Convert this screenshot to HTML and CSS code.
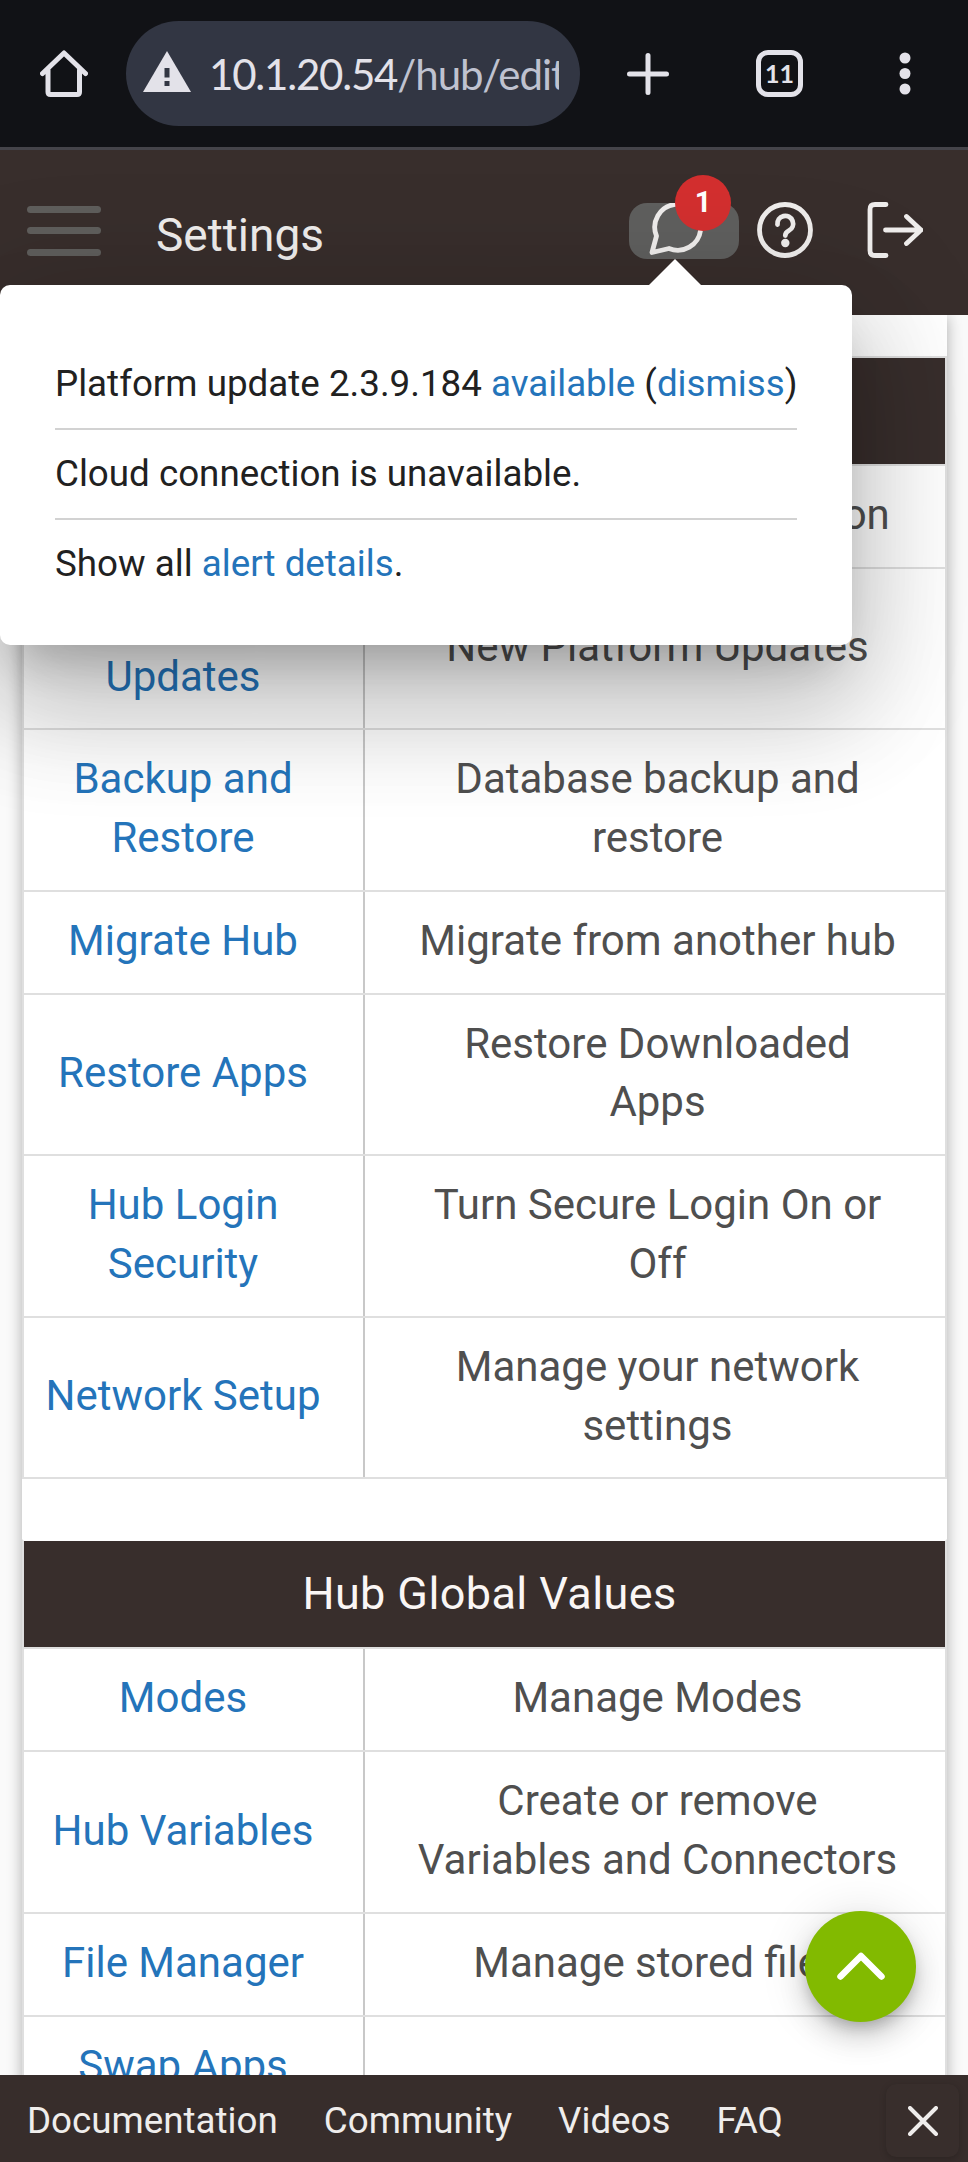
FILE: index.html
```html
<!DOCTYPE html>
<html lang="en">

<head>
    <meta charset="UTF-8">
    <meta name="viewport" content="width=device-width, initial-scale=1.0">
    <title>Settings</title>
    <link rel="stylesheet" href="styles.css">
</head>

<body>
    <div class="browser_bar">
        <svg class="home" width="48" height="48" viewBox="0 0 48 48">
            <path d="M2.5 23.5 L24 3 L45.5 23.5 M8 20 V42 Q8 44.5 10.5 44.5 H37 Q39.500 44.5 39.500 42 V20" />
        </svg>
        <div class="url">
            <svg width="48" height="41" viewBox="0 0 48 41">
                <path fill="#e3e2e9" d="M24 0 L48 41 H0 Z" />
                <path fill="#323643" d="M21.500 17 H26.500 V26.500 H21.500 Z M21.500 30 H26.500 V35 H21.500 Z" />
            </svg>
            <div class="url_text"><span class="host">10.1.20.54</span><span class="path">/hub/edit</span></div>
        </div>
        <svg class="plus" width="42" height="42" viewBox="0 0 42 42">
            <path d="M21 2.500 V39.500 M2.500 21 H39.500" />
        </svg>
        <div class="tabs">11</div>
        <svg class="dots" width="12" height="43" viewBox="0 0 12 43">
            <circle cx="6" cy="6" r="5.500" />
            <circle cx="6" cy="21.500" r="5.500" />
            <circle cx="6" cy="37" r="5.500" />
        </svg>
    </div>

    <header class="app_header">
        <div class="hamburger"><span></span><span></span><span></span></div>
        <h1>Settings</h1>
        <div class="alerts">
            <svg width="56" height="56" viewBox="0 0 56 56">
                <path d="M4 49.500 L8.500 33 A23 23 0 1 1 21 45.500 Z" />
            </svg>
            <div class="badge">1</div>
        </div>
        <svg class="help" width="56" height="56" viewBox="0 0 56 56">
            <circle cx="28" cy="28" r="25.500" />
            <path d="M20.500 22.500 A7.800 7.800 0 1 1 32 28.500 Q28.300 30.500 28.300 33.500" />
            <circle class="dot" cx="28.300" cy="41" r="4.200" />
        </svg>
        <svg class="logout" width="56" height="56" viewBox="0 0 56 56">
            <path d="M19 2.500 H8 Q3 2.500 3 7.500 V48.500 Q3 53.500 8 53.500 H19 M18.500 28 H54 M39.500 14.500 L54 28 L39.500 41.500" />
        </svg>

        <div class="popup">
            <p>Platform update 2.3.9.184 <a>available</a> (<a>dismiss</a>)</p>
            <p>Cloud connection is unavailable.</p>
            <p>Show all <a>alert details</a>.</p>
        </div>
    </header>

    <main>
        <div class="card">
            <div class="table">
                <div class="thead">Hub Settings</div>
                <div class="row"><a>Hub Details</a><div>Hub location information</div></div>
                <div class="row"><a>Check for Updates</a><div>New Platform Updates</div></div>
                <div class="row"><a>Backup and Restore</a><div>Database backup and restore</div></div>
                <div class="row"><a>Migrate Hub</a><div>Migrate from another hub</div></div>
                <div class="row"><a>Restore Apps</a><div>Restore Downloaded Apps</div></div>
                <div class="row"><a>Hub Login Security</a><div>Turn Secure Login On or Off</div></div>
                <div class="row"><a>Network Setup</a><div>Manage your network settings</div></div>
            </div>
            <div class="table">
                <div class="thead">Hub Global Values</div>
                <div class="row"><a>Modes</a><div>Manage Modes</div></div>
                <div class="row"><a>Hub Variables</a><div>Create or remove Variables and Connectors</div></div>
                <div class="row"><a>File Manager</a><div>Manage stored files</div></div>
                <div class="row"><a>Swap Apps Device</a><div></div></div>
            </div>
        </div>
    </main>

    <div class="to_top">
        <svg width="48" height="28" viewBox="0 0 48 28">
            <path d="M3.500 24.500 L24 4 L44.500 24.500" />
        </svg>
    </div>

    <footer>
        <a>Documentation</a>
        <a>Community</a>
        <a>Videos</a>
        <a>FAQ</a>
        <div class="close">
            <svg width="30" height="30" viewBox="0 0 30 30">
                <path d="M2 2 L28 28 M28 2 L2 28" />
            </svg>
        </div>
    </footer>
</body>

</html>
```
FILE: styles.css
```css
* {
    box-sizing: border-box;
}

body {
    font-family: Roboto, "Liberation Sans", sans-serif;
    margin: 0;
    height: 2162px;
    display: flex;
    flex-direction: column;
    overflow: hidden;
    background-color: #fafafa;
    position: relative;
}

svg {
    fill: none;
    stroke-linecap: round;
    stroke-linejoin: round;
    flex: none;
}

a {
    color: #2474ba;
    text-decoration: none;
}

/* Browser toolbar */

.browser_bar {
    flex: none;
    height: 150px;
    padding: 0 57px 0 40px;
    border-bottom: 3px solid #45444a;
    background-color: #111216;
    display: flex;
    align-items: center;
}

.home,
.plus {
    stroke: #e3e2e9;
    stroke-width: 5;
}

.url {
    width: 454px;
    height: 105px;
    margin: 0 47px 0 38px;
    padding: 0 21px 0 17px;
    border-radius: 53px;
    background-color: #323643;
    display: flex;
    align-items: center;
}

.url svg {
    margin-top: -4px;
}

.url_text {
    margin-left: 18px;
    flex: 1;
    overflow: hidden;
    white-space: nowrap;
    font: 42px Lato, sans-serif;
    color: #e3e2e9;
}

.host {
    letter-spacing: -1.2px;
}

.path {
    letter-spacing: -1px;
    color: #bfc2d0;
}

.tabs {
    width: 47px;
    height: 47px;
    margin: 0 96px 0 87px;
    border: 5px solid #e3e2e9;
    border-radius: 12px;
    color: #e3e2e9;
    font: bold 25px/37px Lato, sans-serif;
    text-align: center;
}

.dots {
    fill: #e3e2e9;
}

/* App header */

.app_header {
    flex: none;
    height: 165px;
    padding: 0 45px 8px 27px;
    background-color: #382e2c;
    display: flex;
    align-items: center;
    position: relative;
    z-index: 2;
}

.app_header svg {
    stroke: #efedec;
    stroke-width: 4.8;
}

.hamburger {
    width: 74px;
    display: flex;
    flex-direction: column;
    gap: 14.500px;
    margin-top: 4px;
}

.hamburger span {
    height: 7px;
    border-radius: 4px;
    background-color: #5f5e5c;
}

h1 {
    margin: 12px auto 0 55px;
    font-size: 46px;
    font-weight: 400;
    color: #efedec;
}

.alerts {
    width: 110px;
    height: 56px;
    margin: 5px 18px 0 0;
    padding-left: 19px;
    border-radius: 18px;
    background-color: #5f5f5e;
    position: relative;
}

.badge {
    position: absolute;
    left: 46px;
    top: -28px;
    width: 56px;
    height: 56px;
    border-radius: 50%;
    background-color: #d32f2f;
    color: #fff;
    font-size: 29px;
    font-weight: 700;
    line-height: 54px;
    text-align: center;
}

.help,
.logout {
    margin-top: 3px;
}

.help {
    margin-right: 54px;
}

.help .dot {
    fill: #efedec;
    stroke: none;
}

.popup {
    position: absolute;
    left: 0;
    top: 135px;
    width: 852px;
    height: 360px;
    padding: 55px 55px 53px;
    border-radius: 10px;
    background-color: #fff;
    box-shadow: 0 30px 41px -19px rgba(0, 0, 0, 0.2), 0 66px 104px 8px rgba(0, 0, 0, 0.16), 0 25px 126px 22px rgba(0, 0, 0, 0.13);
}

.popup::before {
    content: "";
    position: absolute;
    left: 649px;
    top: -26px;
    border: 26px solid transparent;
    border-top: 0;
    border-bottom-color: #fff;
}

.popup p {
    margin: 0;
    height: 90px;
    border-bottom: 2px solid #d2d2d2;
    font-size: 36.750px;
    line-height: 88px;
    white-space: nowrap;
    color: #212121;
}

.popup p:last-child {
    border: none;
}

/* Settings tables */

main {
    flex: 1;
    min-height: 0;
    overflow: hidden;
    padding: 0 21px 0 22px;
}

.card {
    background-color: #fff;
    padding-top: 41px;
    box-shadow: 0 2px 14px rgba(0, 0, 0, 0.3);
}

.table {
    margin-bottom: 60px;
    border: 2px solid #dfdfdf;
    border-bottom: none;
}

.table + .table {
    border-top-color: #fff;
}

.thead {
    height: 106px;
    padding-left: 10px;
    background-color: #382e2c;
    color: #faf6f5;
    font-size: 45px;
    letter-spacing: 0.4px;
    line-height: 106px;
    text-align: center;
}

.thead + .row {
    border-top: 2px solid #dfdfdf;
}

.row {
    display: grid;
    grid-template-columns: 341px 1fr;
    border-bottom: 2px solid #dfdfdf;
    font-size: 42px;
    line-height: 58.700px;
    text-align: center;
}

.row > * {
    padding: 20px 42px 22.150px 47px;
    color: #4f4f4f;
    display: flex;
    align-items: center;
    justify-content: center;
}

.row > a {
    padding: 20px 41px 22.150px 20px;
    border-right: 2px solid #c8c8c8;
    color: #2474ba;
}

/* Floating button and footer */

.to_top {
    position: absolute;
    left: 805px;
    top: 1911px;
    width: 111px;
    height: 111px;
    border-radius: 50%;
    background-color: #82ba00;
    box-shadow: 0 8px 14px -3px rgba(0, 0, 0, 0.2), 0 16px 28px rgba(0, 0, 0, 0.14), 0 3px 50px rgba(0, 0, 0, 0.12);
    display: flex;
    align-items: center;
    justify-content: center;
}

.to_top svg {
    stroke: #fff;
    stroke-width: 6.5;
    margin-top: -2px;
}

footer {
    flex: none;
    height: 87px;
    padding: 0 9px 0 27px;
    background-color: #372d2b;
    display: flex;
    align-items: center;
    gap: 46px;
    position: relative;
}

footer a {
    color: #efedec;
    font-size: 36.750px;
    line-height: 50px;
    margin-top: 4px;
}

.close {
    width: 73px;
    height: 73px;
    margin: 4px 0 0 auto;
    border-radius: 10px;
    box-shadow: 0 2px 7px rgba(0, 0, 0, 0.2);
    background-color: #382e2c;
    display: flex;
    align-items: center;
    justify-content: center;
}

.close svg {
    stroke: #efedec;
    stroke-width: 4;
}
```
